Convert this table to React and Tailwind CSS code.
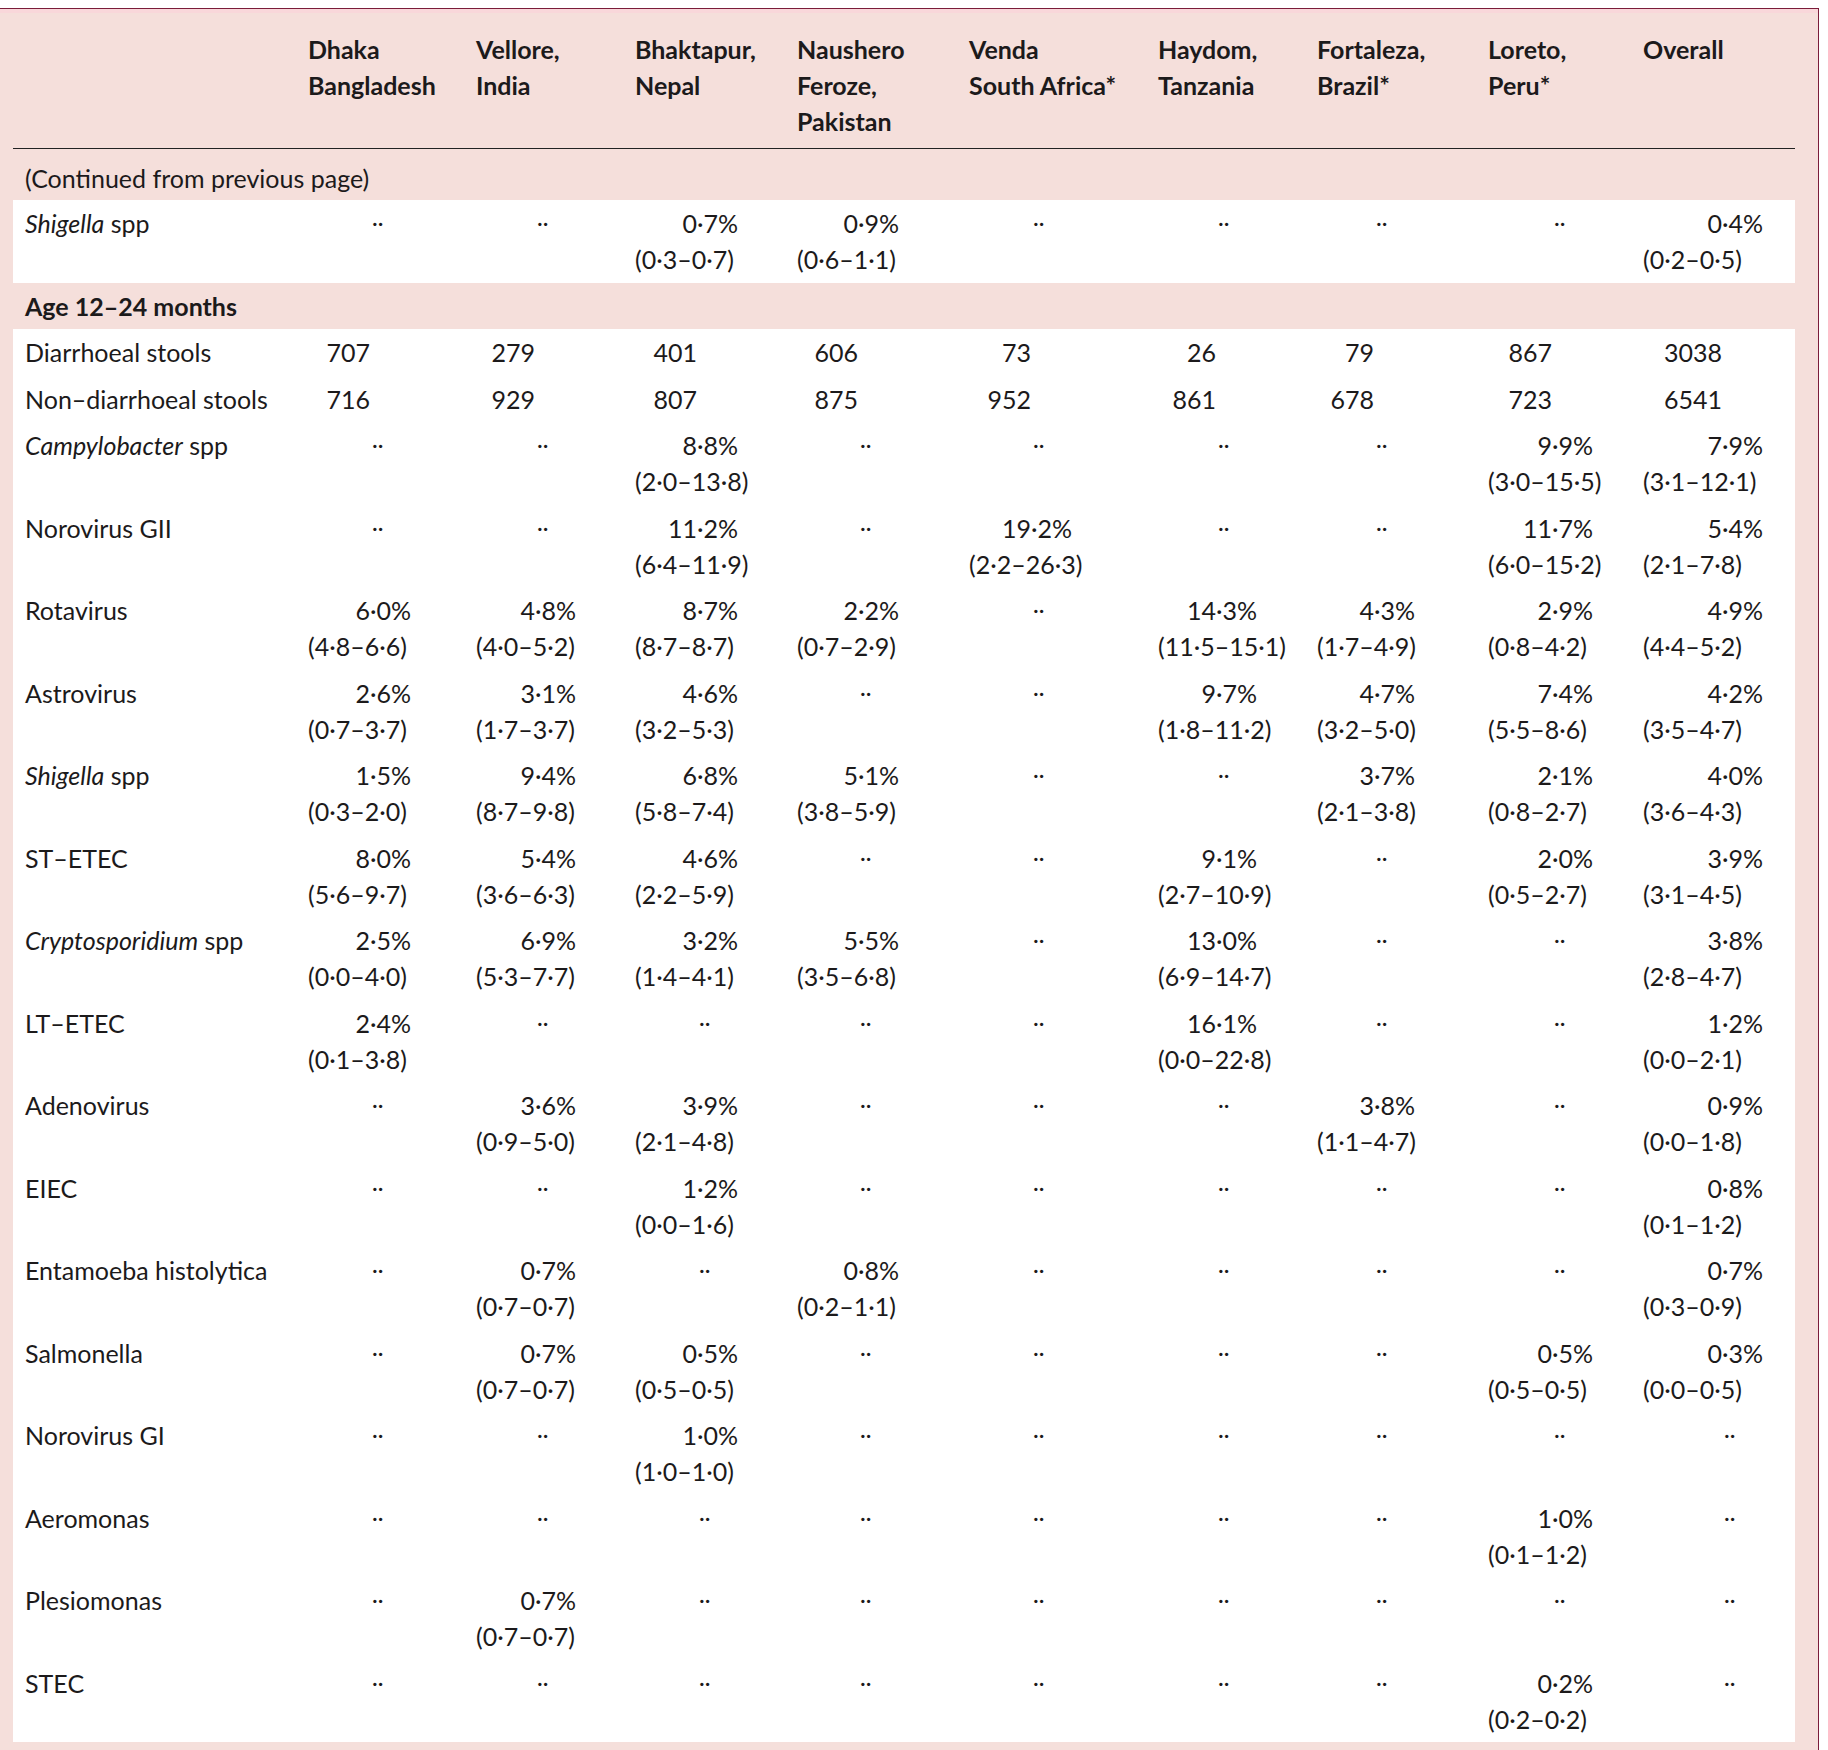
import React from 'react';

const GRID = 'grid grid-cols-[295px_168px_159px_162px_172px_189px_159px_171px_155px_152px]';

// per column: header lines, decimal anchor width, dots offset
const COLUMNS = [
    { head: ['Dhaka', 'Bangladesh'], anchor: 'w-[62px]', dot: 'pl-[64px]' },
    { head: ['Vellore,', 'India'], anchor: 'w-[59px]', dot: 'pl-[61px]' },
    { head: ['Bhaktapur,', 'Nepal'], anchor: 'w-[62px]', dot: 'pl-[64px]' },
    { head: ['Naushero', 'Feroze,', 'Pakistan'], anchor: 'w-[61px]', dot: 'pl-[63px]' },
    { head: ['Venda', 'South Africa*'], anchor: 'w-[62px]', dot: 'pl-[64px]' },
    { head: ['Haydom,', 'Tanzania'], anchor: 'w-[58px]', dot: 'pl-[60px]' },
    { head: ['Fortaleza,', 'Brazil*'], anchor: 'w-[57px]', dot: 'pl-[59px]' },
    { head: ['Loreto,', 'Peru*'], anchor: 'w-[64px]', dot: 'pl-[66px]' },
    { head: ['Overall'], anchor: 'w-[79px]', dot: 'pl-[81px]' },
];

const _ = null;
const p = (pct, ci) => ({ pct, ci });

const ROWS = [
    { label: 'Diarrhoeal stools', values: [707, 279, 401, 606, 73, 26, 79, 867, 3038] },
    { label: 'Non–diarrhoeal stools', values: [716, 929, 807, 875, 952, 861, 678, 723, 6541] },
    { label: <><i>Campylobacter</i> spp</>, values: [_, _, p('8·8', '2·0–13·8'), _, _, _, _, p('9·9', '3·0–15·5'), p('7·9', '3·1–12·1')] },
    { label: 'Norovirus GII', values: [_, _, p('11·2', '6·4–11·9'), _, p('19·2', '2·2–26·3'), _, _, p('11·7', '6·0–15·2'), p('5·4', '2·1–7·8')] },
    { label: 'Rotavirus', values: [p('6·0', '4·8–6·6'), p('4·8', '4·0–5·2'), p('8·7', '8·7–8·7'), p('2·2', '0·7–2·9'), _, p('14·3', '11·5–15·1'), p('4·3', '1·7–4·9'), p('2·9', '0·8–4·2'), p('4·9', '4·4–5·2')] },
    { label: 'Astrovirus', values: [p('2·6', '0·7–3·7'), p('3·1', '1·7–3·7'), p('4·6', '3·2–5·3'), _, _, p('9·7', '1·8–11·2'), p('4·7', '3·2–5·0'), p('7·4', '5·5–8·6'), p('4·2', '3·5–4·7')] },
    { label: <><i>Shigella</i> spp</>, values: [p('1·5', '0·3–2·0'), p('9·4', '8·7–9·8'), p('6·8', '5·8–7·4'), p('5·1', '3·8–5·9'), _, _, p('3·7', '2·1–3·8'), p('2·1', '0·8–2·7'), p('4·0', '3·6–4·3')] },
    { label: 'ST–ETEC', values: [p('8·0', '5·6–9·7'), p('5·4', '3·6–6·3'), p('4·6', '2·2–5·9'), _, _, p('9·1', '2·7–10·9'), _, p('2·0', '0·5–2·7'), p('3·9', '3·1–4·5')] },
    { label: <><i>Cryptosporidium</i> spp</>, values: [p('2·5', '0·0–4·0'), p('6·9', '5·3–7·7'), p('3·2', '1·4–4·1'), p('5·5', '3·5–6·8'), _, p('13·0', '6·9–14·7'), _, _, p('3·8', '2·8–4·7')] },
    { label: 'LT–ETEC', values: [p('2·4', '0·1–3·8'), _, _, _, _, p('16·1', '0·0–22·8'), _, _, p('1·2', '0·0–2·1')] },
    { label: 'Adenovirus', values: [_, p('3·6', '0·9–5·0'), p('3·9', '2·1–4·8'), _, _, _, p('3·8', '1·1–4·7'), _, p('0·9', '0·0–1·8')] },
    { label: 'EIEC', values: [_, _, p('1·2', '0·0–1·6'), _, _, _, _, _, p('0·8', '0·1–1·2')] },
    { label: 'Entamoeba histolytica', values: [_, p('0·7', '0·7–0·7'), _, p('0·8', '0·2–1·1'), _, _, _, _, p('0·7', '0·3–0·9')] },
    { label: 'Salmonella', values: [_, p('0·7', '0·7–0·7'), p('0·5', '0·5–0·5'), _, _, _, _, p('0·5', '0·5–0·5'), p('0·3', '0·0–0·5')] },
    { label: 'Norovirus GI', values: [_, _, p('1·0', '1·0–1·0'), _, _, _, _, _, _] },
    { label: 'Aeromonas', values: [_, _, _, _, _, _, _, p('1·0', '0·1–1·2'), _] },
    { label: 'Plesiomonas', values: [_, p('0·7', '0·7–0·7'), _, _, _, _, _, _, _] },
    { label: 'STEC', values: [_, _, _, _, _, _, _, p('0·2', '0·2–0·2'), _] },
];

const Cell = ({ value, col }) => {
    if (value === null) {
        return <div className={`${col.dot} text-[22px]`}>··</div>;
    }
    if (typeof value === 'number') {
        return <div className={`${col.anchor} text-right`}>{value}</div>;
    }
    const [whole, frac] = value.pct.split('·');
    return (
        <div className="whitespace-nowrap">
            <div className="flex">
                <span className={`${col.anchor} shrink-0 text-right`}>{whole}</span>
                <span>·{frac}%</span>
            </div>
            <div>({value.ci})</div>
        </div>
    );
};

const DataRow = ({ label, values }) => (
    <div className={`${GRID} pt-[5px] pb-[5.5px]`}>
        <div className="pl-[12px] whitespace-nowrap">{label}</div>
        {values.map((v, i) => (
            <Cell key={i} value={v} col={COLUMNS[i]} />
        ))}
    </div>
);

const App = () => {
    return (
        <div className="min-h-[1750px] bg-white pt-[8px] font-['Lato',sans-serif] text-[25px] leading-[36px] text-[#1c1a1b]">
            <div className="w-[1819px] border-t border-r border-[#7b1c3a] bg-[#f5dfdb] pb-[8px]">
                <div className="h-[4px] bg-[#f9d7da]" />
                <div className="w-[1795px] pl-[13px]">
                    {/* column heads */}
                    <div className={`${GRID} pt-[18px] pb-[9px] border-b border-[#222]`}>
                        <div />
                        {COLUMNS.map((c, i) => (
                            <div key={i} className="font-bold">
                                {c.head.map((line, j) => (
                                    <div key={j} className="whitespace-nowrap">{line}</div>
                                ))}
                            </div>
                        ))}
                    </div>

                    <div className="pt-[11px] pb-[4px] pl-[12px]">(Continued from previous page)</div>

                    <div className="bg-white">
                        <DataRow
                            label={<><i>Shigella</i> spp</>}
                            values={[_, _, p('0·7', '0·3–0·7'), p('0·9', '0·6–1·1'), _, _, _, _, p('0·4', '0·2–0·5')]}
                        />
                    </div>

                    <div className="pt-[5px] pb-[5.5px] pl-[12px] font-bold">Age 12–24 months</div>

                    <div className="bg-white">
                        {ROWS.map((row, i) => (
                            <DataRow key={i} label={row.label} values={row.values} />
                        ))}
                    </div>
                </div>
            </div>
        </div>
    );
};

export default App;
